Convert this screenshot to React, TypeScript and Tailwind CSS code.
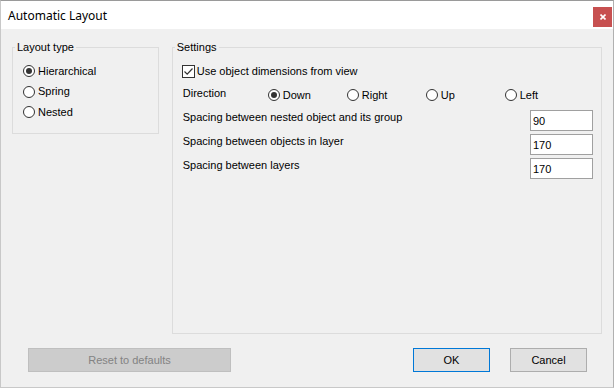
const Radio = ({ checked }: { checked?: boolean }) => (
  <span className="flex h-[12px] w-[12px] shrink-0 items-center justify-center rounded-full border border-[#333333] bg-white">
    {checked && <span className="h-[6px] w-[6px] rounded-full bg-[#333333]" />}
  </span>
);

const Checkbox = () => (
  <span className="flex h-[13px] w-[13px] shrink-0 items-center justify-center border border-[#333333] bg-white">
    <svg width="11" height="11" viewBox="0 0 11 11">
      <path d="M1.5 5.5 L4.2 8.2 L9.5 2.5" fill="none" stroke="#333333" strokeWidth="1.2" />
    </svg>
  </span>
);

const spacing = [
  { label: "Spacing between nested object and its group", value: "90" },
  { label: "Spacing between objects in layer", value: "170" },
  { label: "Spacing between layers", value: "170" },
];

const directions = [
  { label: "Down", checked: true },
  { label: "Right" },
  { label: "Up" },
  { label: "Left" },
];

export default function App() {
  return (
    <div
      className="flex h-[388px] w-[614px] flex-col border border-[#c8c8c8] border-t-[#9a9a9a] border-r-[#b0b0b0] bg-[#f0f0f0] text-[11px] leading-[13px] text-black"
      style={{ fontFamily: '"Liberation Sans", Arial, sans-serif' }}
    >
      {/* Title bar */}
      <div className="flex h-[28px] shrink-0 items-start bg-white">
        <span
          className="mt-[7px] ml-[7px] text-[12px] leading-[16px] text-black"
          style={{ fontFamily: '"Noto Sans", sans-serif' }}
        >
          Automatic Layout
        </span>
        <div className="mt-[6px] mr-[1px] ml-auto flex h-[20px] w-[19px] items-center justify-center bg-[#c75050]">
          <svg width="6" height="6" viewBox="0 0 6 6">
            <path d="M0.5 0.5 L5.5 5.5 M5.5 0.5 L0.5 5.5" stroke="white" strokeWidth="1.6" />
          </svg>
        </div>
      </div>

      {/* Body */}
      <div className="flex flex-1 flex-col px-[11px] pt-[11px]">
        <div className="flex gap-[13px]">
          <fieldset className="h-[94px] w-[147px] border border-[#dcdcdc]">
            <legend className="ml-[2px] px-[2px] leading-[14px]">Layout type</legend>
            <div className="mt-[7px] flex flex-col pl-[10px]">
              {["Hierarchical", "Spring", "Nested"].map((t, i) => (
                <div key={t} className="flex h-[20.5px] items-center gap-[3px]">
                  <Radio checked={i === 0} />
                  <span>{t}</span>
                </div>
              ))}
            </div>
          </fieldset>

          <fieldset className="h-[294px] w-[431px] border border-[#dcdcdc]">
            <legend className="ml-[2px] px-[2px] leading-[14px]">Settings</legend>
            <div className="mt-[7px] flex flex-col pr-[8px] pl-[9px]">
              <div className="flex h-[20px] items-center gap-[2px]">
                <Checkbox />
                <span>Use object dimensions from view</span>
              </div>
              <div className="mt-[4px] flex h-[20px] items-center pl-[1px]">
                <span className="mb-[3px] w-[85px]">Direction</span>
                {directions.map((d) => (
                  <div key={d.label} className="flex w-[79px] items-center gap-[3px]">
                    <Radio checked={d.checked} />
                    <span>{d.label}</span>
                  </div>
                ))}
              </div>
              <div className="mt-[5px] flex flex-col gap-[3px] pl-[1px]">
                {spacing.map((s) => (
                  <div key={s.label} className="flex h-[21px] items-start justify-between">
                    <span className="pt-[1px]">{s.label}</span>
                    <input
                      readOnly
                      value={s.value}
                      className="h-[21px] w-[63px] border border-[#a0a0a0] bg-white px-[2px] text-[11px] text-black outline-none"
                    />
                  </div>
                ))}
              </div>
            </div>
          </fieldset>
        </div>

        {/* Buttons */}
        <div className="mt-[14px] flex items-center pr-[15px] pl-[16px]">
          <button className="h-[24px] w-[203px] border border-[#bfbfbf] bg-[#cccccc] text-[#838383]">
            Reset to defaults
          </button>
          <button className="ml-auto h-[24px] w-[77px] border border-[#0078d7] bg-[#e1e1e1]">OK</button>
          <button className="ml-[20px] h-[24px] w-[77px] border border-[#adadad] bg-[#e1e1e1]">Cancel</button>
        </div>
      </div>
    </div>
  );
}
